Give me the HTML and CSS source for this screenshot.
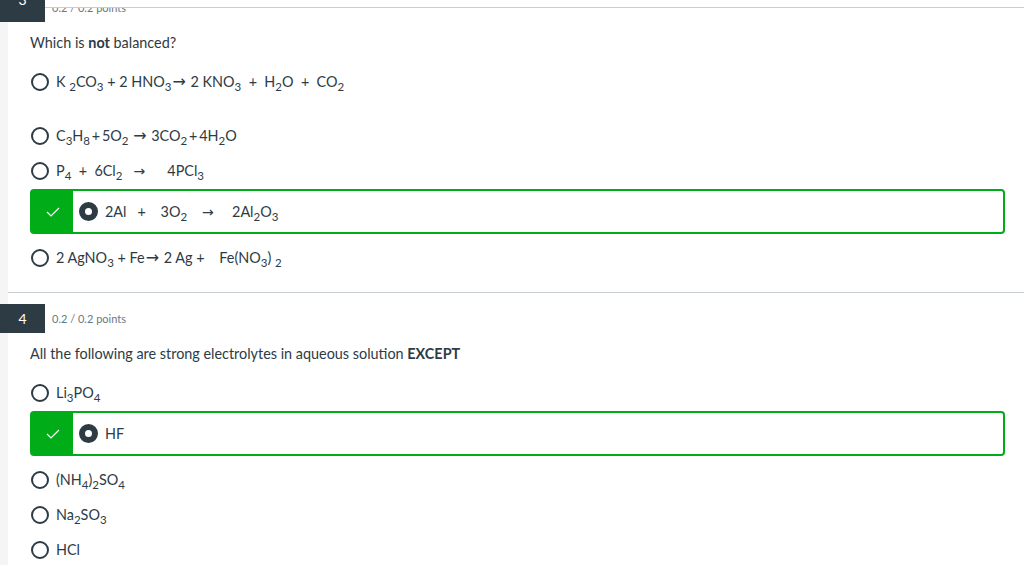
FILE: index.html
```html
<!DOCTYPE html>
<html lang="en">
<head>
<meta charset="utf-8">
<title>Quiz</title>
<link rel="stylesheet" href="styles.css">
</head>
<body>
<div class="quiz">
  <div class="topmask"></div>
  <section class="question q-first">
    <div class="q-header">
      <div class="q-num">3</div>
      <div class="q-points">0.2 / 0.2 points</div>
    </div>
    <div class="q-text">Which is <b>not</b> balanced?</div>
    <div class="answers">
      <div class="opt extra"><span class="radio"></span><span class="label">K <sub>2</sub>CO<sub>3</sub> + 2 HNO<sub>3</sub><span class="arr">&#8594;</span> 2 KNO<sub>3</sub>&nbsp; +&nbsp; H<sub>2</sub>O&nbsp; +&nbsp; CO<sub>2</sub></span></div>
      <div class="opt"><span class="radio"></span><span class="label">C<sub>3</sub>H<sub>8</sub>&#8201;+&#8201;5O<sub>2</sub> <span class="arr">&#8594;</span> 3CO<sub>2</sub>&#8201;+&#8201;4H<sub>2</sub>O</span></div>
      <div class="opt"><span class="radio"></span><span class="label">P<sub>4</sub>&nbsp; +&nbsp; 6Cl<sub>2</sub>&nbsp;&nbsp; <span class="arr sm">&#8594;</span>&nbsp;&nbsp;&nbsp;&nbsp;&nbsp; 4PCl<sub>3</sub></span></div>
      <div class="opt correct">
        <span class="mark"><svg width="14" height="10" viewBox="0 0 14 10"><polyline points="1,5 5,9 13,1" fill="none" stroke="#fff" stroke-width="1.2"/></svg></span>
        <span class="radio filled"></span><span class="label">2Al&nbsp;&nbsp; +&nbsp;&nbsp;&nbsp; 3O<sub>2</sub>&nbsp;&nbsp;&nbsp; <span class="arr sm">&#8594;</span>&nbsp;&nbsp;&nbsp;&nbsp; 2Al<sub>2</sub>O<sub>3</sub></span>
      </div>
      <div class="opt"><span class="radio"></span><span class="label">2 AgNO<sub>3</sub> + Fe<span class="arr">&#8594;</span> 2 Ag +&nbsp;&nbsp;&nbsp; Fe(NO<sub>3</sub>) <sub>2</sub></span></div>
    </div>
  </section>
  <section class="question">
    <div class="q-header">
      <div class="q-num">4</div>
      <div class="q-points">0.2 / 0.2 points</div>
    </div>
    <div class="q-text">All the following are strong electrolytes in aqueous solution <b>EXCEPT</b></div>
    <div class="answers">
      <div class="opt"><span class="radio"></span><span class="label">Li<sub>3</sub>PO<sub>4</sub></span></div>
      <div class="opt correct">
        <span class="mark"><svg width="14" height="10" viewBox="0 0 14 10"><polyline points="1,5 5,9 13,1" fill="none" stroke="#fff" stroke-width="1.2"/></svg></span>
        <span class="radio filled"></span><span class="label">HF</span>
      </div>
      <div class="opt"><span class="radio"></span><span class="label">(NH<sub>4</sub>)<sub>2</sub>SO<sub>4</sub></span></div>
      <div class="opt"><span class="radio"></span><span class="label">Na<sub>2</sub>SO<sub>3</sub></span></div>
      <div class="opt"><span class="radio"></span><span class="label">HCl</span></div>
    </div>
  </section>
</div>
</body>
</html>
```

FILE: styles.css
```css
html, body {
  margin: 0;
  padding: 0;
  background: #ffffff;
}
body {
  font-family: Lato, "Liberation Sans", sans-serif;
  color: #2d3b45;
  font-size: 14.4px;
  overflow: hidden;
}
.quiz {
  position: relative;
  height: 565px;
  overflow: hidden;
  background: #f5f5f5;
  padding-left: 8px;
}
.topmask {
  position: absolute;
  top: 0;
  left: 45px;
  right: 0;
  height: 7px;
  background: #ffffff;
  border-bottom: 1px solid #c7cdd1;
  z-index: 2;
}
.question {
  background: #ffffff;
  padding-bottom: 17px;
}
.question + .question {
  border-top: 1px solid #c7cdd1;
  padding-top: 11px;
}
.q-first {
  margin-top: -7px;
}
.q-header {
  display: flex;
  align-items: center;
  height: 29px;
  margin-left: -8px;
}
.q-num {
  width: 45px;
  height: 29px;
  background: #2d3b45;
  color: #ffffff;
  display: flex;
  align-items: center;
  justify-content: center;
  font-size: 14px;
  box-sizing: border-box;
}
.q-first .q-num {
  padding-bottom: 17px;
}
.q-points {
  margin-left: 7px;
  font-size: 11px;
  color: #6b7780;
}
.q-text {
  padding: 11px 0 11px 22px;
  line-height: 20px;
}
.answers {
  display: flex;
  flex-direction: column;
  padding-left: 22px;
  padding-right: 19px;
}
.opt {
  height: 35px;
  display: flex;
  align-items: center;
  line-height: 20px;
  white-space: nowrap;
}
.opt.extra {
  margin-bottom: 19px;
}
.radio {
  width: 14px;
  height: 14px;
  border: 2px solid #2d3b45;
  border-radius: 50%;
  flex: none;
  margin-left: 1px;
  margin-right: 7px;
}
.radio.filled {
  width: 7px;
  height: 7px;
  border: 6px solid #2d3b45;
  background: #ffffff;
  margin-left: 6px;
}
.label sub {
  font-size: 11.5px;
  vertical-align: -4px;
  line-height: 0;
}
.arr {
  font-family: "DejaVu Sans", sans-serif;
  font-size: 16px;
  line-height: 0;
  padding: 0 1px;
}
.arr.sm {
  font-size: 14px;
  padding: 0;
}
.opt.correct {
  height: 41px;
  border: 2px solid #00ac18;
  border-radius: 4px;
  margin: 1px 0 6px;
  align-items: stretch;
}
.opt.correct .radio,
.opt.correct .label {
  align-self: center;
}
.mark {
  width: 41px;
  background: #00ac18;
  display: flex;
  align-items: center;
  justify-content: center;
  flex: none;
}
```
